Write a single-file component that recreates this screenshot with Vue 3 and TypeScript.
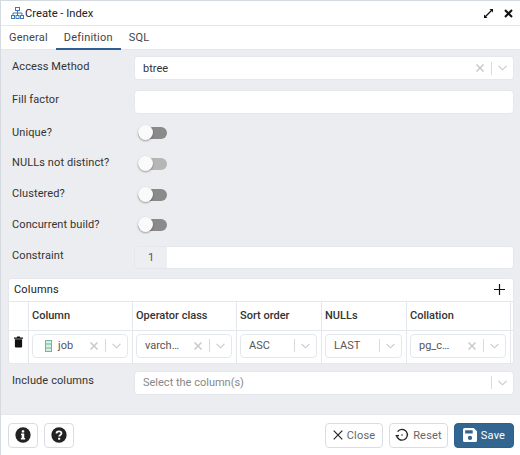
<script setup lang="ts">
const tabs = ['General', 'Definition', 'SQL']
const switches = [
  { label: 'Unique?', disabled: false },
  { label: 'NULLs not distinct?', disabled: true },
  { label: 'Clustered?', disabled: false },
  { label: 'Concurrent build?', disabled: false },
]
const cols = [
  { head: 'Column', cls: 'c1', value: 'job', clear: true, icon: true },
  { head: 'Operator class', cls: 'c2', value: 'varch…', clear: true, icon: false },
  { head: 'Sort order', cls: 'c3', value: 'ASC', clear: false, icon: false },
  { head: 'NULLs', cls: 'c4', value: 'LAST', clear: false, icon: false },
  { head: 'Collation', cls: 'c5', value: 'pg_c…', clear: true, icon: false },
]
</script>

<template>
  <div class="dialog">
    <header class="title">
      <svg class="logo" width="13" height="12" viewBox="0 0 13 12" fill="none" stroke="#3f78b8" stroke-width="1">
        <rect x="4.5" y="0.5" width="4" height="3" />
        <rect x="0.5" y="8.5" width="3" height="3" />
        <rect x="5" y="8.5" width="3" height="3" />
        <rect x="9.5" y="8.5" width="3" height="3" />
        <path d="M6.5 3.5V8.5M2 8.5V6H11V8.5" />
      </svg>
      <span class="title-text">Create - Index</span>
      <svg class="expand" width="11" height="11" viewBox="0 0 11 11">
        <path d="M1.5 9.5L9.5 1.5" stroke="#111" stroke-width="1.2" />
        <path d="M6.5 1H10V4.5ZM1 6.5V10H4.5Z" fill="#111" />
      </svg>
      <svg class="close" width="9" height="9" viewBox="0 0 9 9">
        <path d="M1 1L8 8M8 1L1 8" stroke="#111" stroke-width="2" />
      </svg>
    </header>

    <nav class="tabs">
      <span v-for="t in tabs" :key="t" class="tab" :class="{ active: t === 'Definition' }">{{ t }}</span>
    </nav>

    <main class="form">
      <div class="row first">
        <label>Access Method</label>
        <div class="select">
          <span class="value">btree</span>
          <svg class="x" width="8" height="8" viewBox="0 0 8 8"><path d="M0.5 0.5L7.5 7.5M7.5 0.5L0.5 7.5" /></svg>
          <i class="sep"></i>
          <svg class="chev" width="9" height="6" viewBox="0 0 9 6"><path d="M0.5 0.8L4.5 4.8L8.5 0.8" /></svg>
        </div>
      </div>
      <div class="row fill">
        <label>Fill factor</label>
        <div class="input"></div>
      </div>

      <div class="switches">
        <div v-for="s in switches" :key="s.label" class="switch-row">
          <label>{{ s.label }}</label>
          <span class="switch" :class="{ off: s.disabled }"><i class="knob"></i></span>
        </div>
      </div>

      <div class="row constraint">
        <label>Constraint</label>
        <div class="group">
          <span class="addon">1</span>
          <span class="group-input"></span>
        </div>
      </div>

      <section class="panel">
        <div class="panel-head">
          <span>Columns</span>
          <svg width="11" height="11" viewBox="0 0 11 11"><path d="M5.5 0V11M0 5.5H11" stroke="#111" stroke-width="1.2" /></svg>
        </div>
        <div class="thead">
          <span class="del"></span>
          <span v-for="c in cols" :key="c.head" class="th" :class="c.cls">{{ c.head }}</span>
        </div>
        <div class="tbody">
          <span class="del">
            <svg width="9" height="12" viewBox="0 0 10 12"><path fill="#111" d="M3.5 0H6.5L7 1H10V2.4H0V1H3ZM1 3H9V11A1 1 0 0 1 8 12H2A1 1 0 0 1 1 11Z" /></svg>
          </span>
          <span v-for="c in cols" :key="c.head" class="td" :class="c.cls">
            <span class="cell-select">
              <svg v-if="c.icon" class="col-icon" width="7" height="12" viewBox="0 0 7 12" fill="#d8efe6" stroke="#6fb79c" stroke-width="1">
                <rect x="0.5" y="0.5" width="6" height="11" />
                <path d="M0.5 4H6.5M0.5 8H6.5" />
              </svg>
              <span class="cell-value" :class="{ iconed: c.icon }">{{ c.value }}</span>
              <svg v-if="c.clear" class="x" width="8" height="8" viewBox="0 0 8 8"><path d="M0.5 0.5L7.5 7.5M7.5 0.5L0.5 7.5" /></svg>
              <i class="sep"></i>
              <svg class="chev" width="9" height="6" viewBox="0 0 9 6"><path d="M0.5 0.8L4.5 4.8L8.5 0.8" /></svg>
            </span>
          </span>
        </div>
      </section>

      <div class="row include">
        <label>Include columns</label>
        <div class="select">
          <span class="value placeholder">Select the column(s)</span>
          <i class="sep"></i>
          <svg class="chev" width="9" height="6" viewBox="0 0 9 6"><path d="M0.5 0.8L4.5 4.8L8.5 0.8" /></svg>
        </div>
      </div>
    </main>

    <footer class="footer">
      <button class="btn icon-btn">
        <svg width="16" height="16" viewBox="0 0 18 18">
          <circle cx="9" cy="9" r="8.6" fill="#222" />
          <rect x="7.6" y="3.6" width="2.8" height="2.6" rx="0.6" fill="#fff" />
          <path fill="#fff" d="M6.8 7.4H10.4V12.4H11.4V14.2H6.6V12.4H7.6V9.2H6.8Z" />
        </svg>
      </button>
      <button class="btn icon-btn help">
        <svg width="16" height="16" viewBox="0 0 18 18">
          <circle cx="9" cy="9" r="8.6" fill="#222" />
          <path d="M6.2 7.2C6.2 5.6 7.5 4.8 9 4.8C10.6 4.8 11.8 5.7 11.8 7.1C11.8 8.9 9.2 9 9.2 10.8" fill="none" stroke="#fff" stroke-width="2" />
          <rect x="8" y="12" width="2.4" height="2.3" rx="0.4" fill="#fff" />
        </svg>
      </button>
      <span class="spacer"></span>
      <button class="btn text-btn b-close">
        <svg width="10" height="10" viewBox="0 0 10 10"><path d="M0.7 0.7L9.3 9.3M9.3 0.7L0.7 9.3" stroke="#222" stroke-width="1.2" fill="none" /></svg>
        Close
      </button>
      <button class="btn text-btn b-reset">
        <svg width="14" height="14" viewBox="0 0 14 14" fill="none" stroke="#222" stroke-width="1.3">
          <path d="M2.6 3.6A5.4 5.4 0 1 1 1.6 7.4" />
          <path d="M0.6 7.6H4" />
          <circle cx="7" cy="7" r="0.8" fill="#222" stroke="none" />
        </svg>
        Reset
      </button>
      <button class="btn save">
        <svg width="14" height="14" viewBox="0 0 13 13">
          <path fill="#fff" fill-rule="evenodd" d="M1.5 0H10L13 3V11.5A1.5 1.5 0 0 1 11.5 13H1.5A1.5 1.5 0 0 1 0 11.5V1.5A1.5 1.5 0 0 1 1.5 0ZM2 2V5H9V2ZM6.5 7.2A2 2 0 1 0 6.5 11.2A2 2 0 1 0 6.5 7.2Z" />
        </svg>
        Save
      </button>
    </footer>
  </div>
</template>

<style scoped>
.dialog {
  width: 520px;
  height: 455px;
  box-sizing: border-box;
  display: flex;
  flex-direction: column;
  background: #fff;
  border-top: 1px solid #d5d9e0;
  border-left: 1px solid #d5d9e0;
  font-family: Roboto, "Liberation Sans", sans-serif;
  font-size: 11px;
  color: #222;
  overflow: hidden;
}
.title {
  height: 24px;
  flex: none;
  display: flex;
  align-items: center;
  padding: 0 7px 0 10px;
  border-bottom: 1px solid #e4e7ec;
}
.logo { margin-right: 1px; }
.title-text { flex: 1; font-size: 11.2px; color: #222; }
.expand { margin-right: 10px; }
.tabs {
  height: 24px;
  flex: none;
  display: flex;
  background: #fff;
  border-bottom: 1px solid #e4e7ec;
  box-sizing: border-box;
}
.tab {
  padding: 0 8px;
  line-height: 23px;
  font-size: 11px;
  letter-spacing: 0.2px;
  color: #444;
  height: 24px;
  box-sizing: border-box;
}
.tab.active {
  border-bottom: 2px solid #2d5f92;
}
.form {
  flex: 1;
  background: #ebedf1;
  padding: 6px 6px 0 7px;
  min-height: 0;
}
label {
  letter-spacing: 0.1px;
  color: #333;
  font-size: 11px;
}
.row {
  display: flex;
  align-items: flex-start;
  padding-left: 4px;
}
.row label { width: 122px; flex: none; padding-top: 4px; }
.fill { margin-top: 10px; }
.first { height: 24px; }
.fill label { padding-top: 3px; }
.select, .input {
  flex: 1;
  height: 24px;
  box-sizing: border-box;
  background: #fff;
  border: 1px solid #e4e7ec;
  border-radius: 4px;
  display: flex;
  align-items: center;
}
.value {
  flex: 1;
  padding-left: 8px;
  color: #333;
}
.placeholder { color: #888; }
.x { flex: none; }
.x path { stroke: #c6c9ce; stroke-width: 1.5; fill: none; }
.sep {
  width: 1px;
  height: 13px;
  background: #d9dbe0;
  margin: 0 6px 0 7px;
  flex: none;
}
.chev { margin-right: 6px; flex: none; }
.chev path { stroke: #c6c9ce; stroke-width: 1.1; fill: none; }
.switches { padding-top: 4px; padding-bottom: 5.3px; }
.switch-row {
  height: 30.67px;
  display: flex;
  align-items: center;
  padding-left: 4px;
}
.switch-row label { width: 126px; flex: none; margin-top: -2px; }
.switch {
  position: relative;
  width: 29px;
  height: 12px;
  border-radius: 6px;
  background: #8a8a8a;
  display: block;
}
.switch.off { background: #b6b6b6; }
.knob {
  position: absolute;
  left: 0;
  top: -2px;
  width: 15px;
  height: 15px;
  border-radius: 50%;
  background: #fafafa;
  box-shadow: 0 1px 2px rgba(0, 0, 0, 0.35);
}
.constraint { height: 23px; }
.constraint label { padding-top: 3px; }
.group {
  flex: 1;
  height: 23px;
  display: flex;
  box-sizing: border-box;
  border: 1px solid #e4e7ec;
  border-radius: 4px;
  overflow: hidden;
}
.addon {
  width: 32px;
  background: #eceef2;
  text-align: center;
  line-height: 22px;
  color: #555;
}
.group-input { flex: 1; background: #fff; }
.panel {
  margin-top: 9px;
  background: #fff;
  border: 1px solid #e4e7ec;
  border-radius: 3px;
  height: 86px;
  box-sizing: border-box;
}
.panel-head {
  height: 22px;
  display: flex;
  align-items: center;
  justify-content: space-between;
  padding: 0 8px 0 5px;
  letter-spacing: 0.2px;
  border-bottom: 1px solid #e4e7ec;
  color: #222;
}
.thead, .tbody { display: flex; }
.thead { height: 28px; border-bottom: 1px solid #e4e7ec; }
.tbody { height: 32px; }
.del {
  width: 19px;
  flex: none;
  border-right: 1px solid #e4e7ec;
  display: flex;
  justify-content: center;
  align-items: flex-start;
  padding-top: 5px;
  box-sizing: content-box;
}
.th, .td {
  box-sizing: border-box;
  border-right: 1px solid #e4e7ec;
  flex: none;
}
.thead .del { padding-top: 0; }
.th {
  padding: 7px 0 0 3px;
  font-weight: 500;
  color: #333;
  white-space: nowrap;
}
.td { padding: 3px 4px 3px 3px; }
.c1, .c2, .c5 { width: 104px; }
.c3, .c4 { width: 85px; }
.cell-select {
  height: 24px;
  box-sizing: border-box;
  display: flex;
  align-items: center;
  border: 1px solid #e4e7ec;
  border-radius: 4px;
  background: #fff;
}
.col-icon { margin-left: 12px; margin-right: 6px; flex: none; }
.cell-value {
  flex: 1;
  padding-left: 8px;
  color: #555;
  white-space: nowrap;
}
.cell-value.iconed { padding-left: 0; }
.include { margin-top: 7px; }
.include label { padding-top: 3px; }
.footer {
  height: 41px;
  flex: none;
  display: flex;
  align-items: center;
  padding: 0 6px 0 7px;
  background: #fff;
  border-top: 1px solid #e4e7ec;
  box-sizing: border-box;
}
.spacer { flex: 1; }
.btn {
  height: 25px;
  box-sizing: border-box;
  border: 1px solid #d9dde3;
  border-radius: 4px;
  background: #fff;
  font-family: inherit;
  font-size: 11px;
  letter-spacing: 0.2px;
  color: #666;
  display: flex;
  align-items: center;
  justify-content: center;
  gap: 4px;
  padding: 0;
}
.icon-btn { width: 30px; }
.help { margin-left: 6px; }
.b-close { width: 58px; }
.b-reset { width: 59px; margin-left: 6px; }
.save {
  width: 60px;
  margin-left: 6px;
  background: #326690;
  border-color: #2d5f92;
  color: #fff;
}
</style>
